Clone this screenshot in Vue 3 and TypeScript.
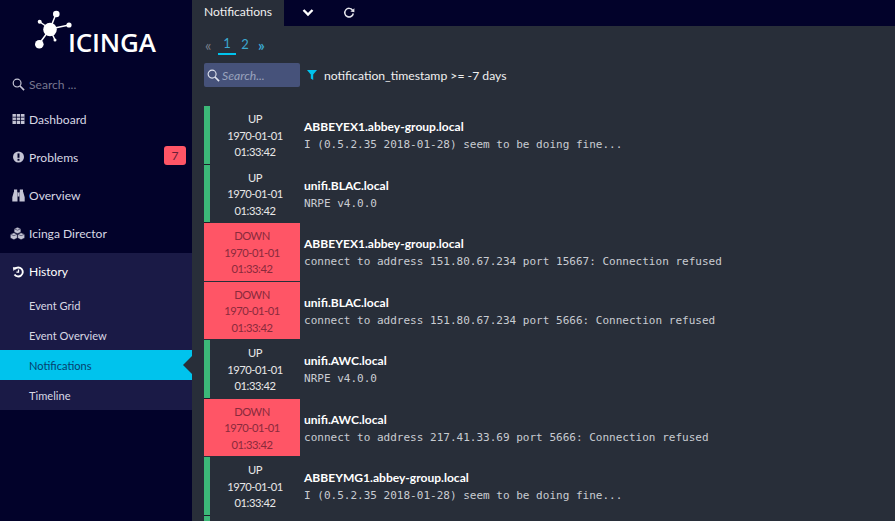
<script setup lang="ts">
type Row = { state: "up" | "down"; host: string; output: string };

const rows: Row[] = [
  { state: "up", host: "ABBEYEX1.abbey-group.local", output: "I (0.5.2.35 2018-01-28) seem to be doing fine..." },
  { state: "up", host: "unifi.BLAC.local", output: "NRPE v4.0.0" },
  { state: "down", host: "ABBEYEX1.abbey-group.local", output: "connect to address 151.80.67.234 port 15667: Connection refused" },
  { state: "down", host: "unifi.BLAC.local", output: "connect to address 151.80.67.234 port 5666: Connection refused" },
  { state: "up", host: "unifi.AWC.local", output: "NRPE v4.0.0" },
  { state: "down", host: "unifi.AWC.local", output: "connect to address 217.41.33.69 port 5666: Connection refused" },
  { state: "up", host: "ABBEYMG1.abbey-group.local", output: "I (0.5.2.35 2018-01-28) seem to be doing fine..." },
  { state: "up", host: "", output: "" },
];

const subItems = ["Event Grid", "Event Overview", "Notifications", "Timeline"];
</script>

<template>
  <div class="app">
    <aside class="sidebar">
      <div class="logo">
        <svg width="130" height="60" viewBox="0 0 130 60">
          <g stroke="#fff" stroke-width="1.5">
            <line x1="15" y1="29" x2="4" y2="44" />
            <line x1="15" y1="29" x2="21" y2="14" />
            <line x1="15" y1="29" x2="5" y2="22" />
            <line x1="15" y1="29" x2="34" y2="25" />
            <line x1="15" y1="29" x2="20" y2="40" />
          </g>
          <g fill="#fff">
            <circle cx="15" cy="29.500" r="6.800" />
            <circle cx="4.300" cy="44.300" r="4.300" />
            <circle cx="21.300" cy="14" r="3.300" />
            <circle cx="4.700" cy="21.700" r="2" />
            <circle cx="34" cy="25" r="2.600" />
            <circle cx="20" cy="40" r="1.500" />
          </g>
          <text x="33" y="51.500" textLength="88" lengthAdjust="spacing" class="logo-text">ICINGA</text>
        </svg>
      </div>

      <div class="nav-search">
        <svg class="ic" width="13" height="13" viewBox="0 0 14 14">
          <circle cx="5.500" cy="5.500" r="4.200" fill="none" stroke="#c4c4d4" stroke-width="1.300" />
          <line x1="8.600" y1="8.600" x2="13" y2="13" stroke="#c4c4d4" stroke-width="1.800" />
        </svg>
        <span>Search ...</span>
      </div>

      <nav class="menu">
        <div class="item">
          <svg class="ic" width="12" height="10" viewBox="0 0 12 10" fill="#c4c4d4">
            <path d="M0 0h12v10H0z" />
            <path d="M0 3.200h12M0 6.400h12M3.900 0v10M8 0v10" stroke="#02022a" stroke-width=".8" />
          </svg>
          <span>Dashboard</span>
        </div>
        <div class="item">
          <svg class="ic" width="12" height="12" viewBox="0 0 12 12">
            <circle cx="6" cy="6" r="5.500" fill="#c4c4d4" />
            <rect x="5" y="2.400" width="2" height="4.400" fill="#02022a" />
            <rect x="5" y="7.800" width="2" height="1.900" fill="#02022a" />
          </svg>
          <span>Problems</span>
          <b class="badge">7</b>
        </div>
        <div class="item">
          <svg class="ic" width="13" height="13" viewBox="0 0 13 13" fill="#c4c4d4">
            <path d="M2 0.500h3.200v2.500H5.500v9.500H0.300V8.200L1.800 3H2zM7.800 0.500H11V3h.2l1.500 5.200v4.300H7.500V3h.3z" />
            <rect x="5.600" y="3.500" width="1.800" height="4" />
          </svg>
          <span>Overview</span>
        </div>
        <div class="item">
          <svg class="ic wide" width="15" height="13" viewBox="0 0 15 13">
            <g fill="#c4c4d4" stroke="#02022a" stroke-width=".5">
              <path d="M7.500 0.300l3.400 1.400v3.500L7.500 6.700 4.100 5.200V1.700z" />
              <path d="M3.900 5.800l3.400 1.400v3.900l-3.400 1.600-3.600-1.600V7.200z" />
              <path d="M11.100 5.800l3.600 1.400v3.900l-3.600 1.600-3.400-1.600V7.200z" />
              <path d="M4.100 1.700l3.400 1.500 3.400-1.500M0.300 7.200l3.600 1.500 3.400-1.500M7.700 7.200l3.400 1.500 3.600-1.500" fill="none" />
            </g>
          </svg>
          <span>Icinga Director</span>
        </div>
        <div class="group">
          <div class="item current">
            <svg class="ic" width="12" height="12" viewBox="0 0 12 12" fill="none" stroke="#fff">
              <path d="M2.400 3A4.500 4.500 0 1 1 2 8.400" stroke-width="1.900" />
              <path d="M0.400 1.200L4.400 1.200 1 5z" fill="#fff" stroke="none" />
              <path d="M6 3.600V6.200H3.900" stroke-width="1.300" />
            </svg>
            <span>History</span>
          </div>
          <div
            v-for="sub in subItems"
            :key="sub"
            class="sub"
            :class="{ active: sub === 'Notifications' }"
          >
            {{ sub }}
          </div>
        </div>
      </nav>
    </aside>

    <main class="main">
      <header class="tabs">
        <div class="tab">Notifications</div>
        <div class="tab-action chevron">
          <svg width="12" height="9" viewBox="0 0 12 9">
            <path d="M1.500 2l4.500 4.500L10.500 2" fill="none" stroke="#fff" stroke-width="2.400" />
          </svg>
        </div>
        <div class="tab-action refresh">
          <svg width="12" height="12" viewBox="0 0 12 12" fill="none">
            <path d="M9.600 3.200A4.300 4.300 0 1 0 10.300 6.500" stroke="#e4e4ea" stroke-width="1.500" />
            <path d="M7.400 4.600L11.400 5.200 11.400 1.200z" fill="#e4e4ea" />
          </svg>
        </div>
      </header>

      <div class="content">
        <div class="pager">
          <span class="muted">«</span>
          <span class="page on">1</span>
          <span class="page">2</span>
          <span class="next">»</span>
        </div>
        <div class="filter">
          <div class="search-box">
            <svg width="13" height="13" viewBox="0 0 14 14">
              <circle cx="5.500" cy="5.500" r="4.300" fill="none" stroke="#dfe3ee" stroke-width="1.200" />
              <line x1="8.600" y1="8.600" x2="13" y2="13" stroke="#dfe3ee" stroke-width="1.800" />
            </svg>
            <span>Search...</span>
          </div>
          <svg class="funnel" width="10" height="10" viewBox="0 0 10 10">
            <path d="M0 0h10L6.200 4.600V10L3.800 8.400V4.600z" fill="#00c3ed" />
          </svg>
          <span class="filter-text">notification_timestamp &gt;= -7 days</span>
        </div>

        <div class="list">
          <div v-for="(r, i) in rows" :key="i" class="row">
            <div class="status" :class="r.state">
              <template v-if="r.host">
                <div>{{ r.state.toUpperCase() }}</div>
                <div>1970-01-01</div>
                <div>01:33:42</div>
              </template>
            </div>
            <div class="detail">
              <div class="host">{{ r.host }}</div>
              <div class="output">{{ r.output }}</div>
            </div>
          </div>
        </div>
      </div>
    </main>
  </div>
</template>

<style>
html,
body {
  margin: 0;
  overflow: hidden;
}
</style>

<style scoped>
.app {
  display: flex;
  width: 895px;
  height: 521px;
  overflow: hidden;
  font-family: Lato, "Open Sans", sans-serif;
  font-size: 12.1px;
  color: #fff;
  background: #282e39;
}
.sidebar {
  width: 192px;
  flex: none;
  background: #02022a;
  color: #d8d8e4;
}
.logo {
  height: 67px;
  padding-left: 35px;
}
.logo svg {
  display: block;
}
.logo-text {
  font-family: "Open Sans", sans-serif;
  font-size: 26px;
  font-weight: 600;
  fill: #fff;
}
.nav-search {
  display: flex;
  align-items: center;
  box-sizing: border-box;
  height: 34px;
  padding-left: 12px;
  color: #77778f;
}
.item {
  position: relative;
  display: flex;
  align-items: center;
  box-sizing: border-box;
  height: 38px;
  padding: 0 0 2px 12px;
}
.ic {
  width: 13px;
  margin-right: 4px;
  flex: none;
}
.ic.wide {
  width: 15px;
  margin-left: -2px;
  margin-right: 4px;
}
.badge {
  position: absolute;
  left: 164px;
  top: 7px;
  width: 22px;
  height: 19px;
  border-radius: 3px;
  background: #ff5566;
  color: #6a2038;
  font-weight: 400;
  text-align: center;
  line-height: 19px;
}
.group {
  background: #1a1a46;
  height: 157px;
}
.current {
  height: 37px;
  padding-bottom: 0;
  color: #fff;
}
.sub {
  position: relative;
  box-sizing: border-box;
  height: 30px;
  padding: 1px 0 0 29px;
  line-height: 30px;
  font-size: 11.1px;
  color: #d8d8e4;
}
.sub.active {
  background: #00c3ed;
  color: #06406e;
}
.sub.active::after {
  content: "";
  position: absolute;
  right: 0;
  top: 6px;
  border: 9px solid transparent;
  border-left: 0;
  border-right-color: #282e39;
}
.main {
  flex: 1;
  min-width: 0;
}
.tabs {
  display: flex;
  height: 26px;
  background: #02022a;
}
.tab {
  width: 92px;
  background: #282e39;
  text-align: center;
  line-height: 24px;
  color: #f0f0f0;
}
.tab-action {
  display: flex;
  align-items: center;
  justify-content: center;
  height: 25px;
}
.chevron {
  width: 48px;
}
.refresh {
  width: 34px;
}
.content {
  padding: 0 12px;
}
.pager {
  display: flex;
  align-items: center;
  height: 37px;
  font-size: 13px;
  color: #3ba8d0;
}
.muted {
  width: 10px;
  margin-left: 1px;
  margin-right: 3px;
  font-size: 15px;
  color: #7a808c;
}
.page {
  width: 18px;
  height: 19px;
  line-height: 19px;
  text-align: center;
}
.page.on {
  border-bottom: 2px solid #00c3ed;
}
.next {
  margin-left: 4px;
  font-size: 15px;
  font-weight: 700;
}
.filter {
  display: flex;
  align-items: center;
  height: 24px;
}
.search-box {
  display: flex;
  align-items: center;
  gap: 2px;
  box-sizing: border-box;
  width: 96px;
  height: 24px;
  padding-left: 3px;
  border-radius: 2px;
  background: #46527a;
  color: #9aa3bd;
  font-style: italic;
  font-size: 12.2px;
}
.funnel {
  margin-left: 7px;
}
.filter-text {
  margin-left: 7px;
  font-size: 12.2px;
  color: #f0f0f0;
}
.list {
  margin-top: 19px;
}
.row {
  display: flex;
  height: 58.5px;
}
.status {
  box-sizing: border-box;
  width: 96px;
  flex: none;
  height: 100%;
  text-align: center;
  font-size: 11.2px;
  letter-spacing: -0.45px;
  line-height: 16.500px;
  padding-top: 5px;
}
.status.up {
  padding-left: 6px;
  background:
    linear-gradient(#3cb878, #3cb878) left top / 6px calc(100% - 1px) no-repeat,
    linear-gradient(#1c2029, #1c2029) left bottom / 6px 1px no-repeat;
  color: #e8e8e8;
}
.status.down {
  border-bottom: 1px solid #282e39;
  background: #ff5566;
  color: #8a2a3c;
}
.detail {
  padding: 12px 0 0 4px;
}
.host {
  margin-bottom: 1px;
  font-weight: 700;
  font-size: 12.05px;
  line-height: 17px;
  color: #fff;
}
.output {
  font-family: "DejaVu Sans Mono", monospace;
  font-size: 11.02px;
  line-height: 18px;
  color: #c8ccd2;
  white-space: pre;
}
</style>
